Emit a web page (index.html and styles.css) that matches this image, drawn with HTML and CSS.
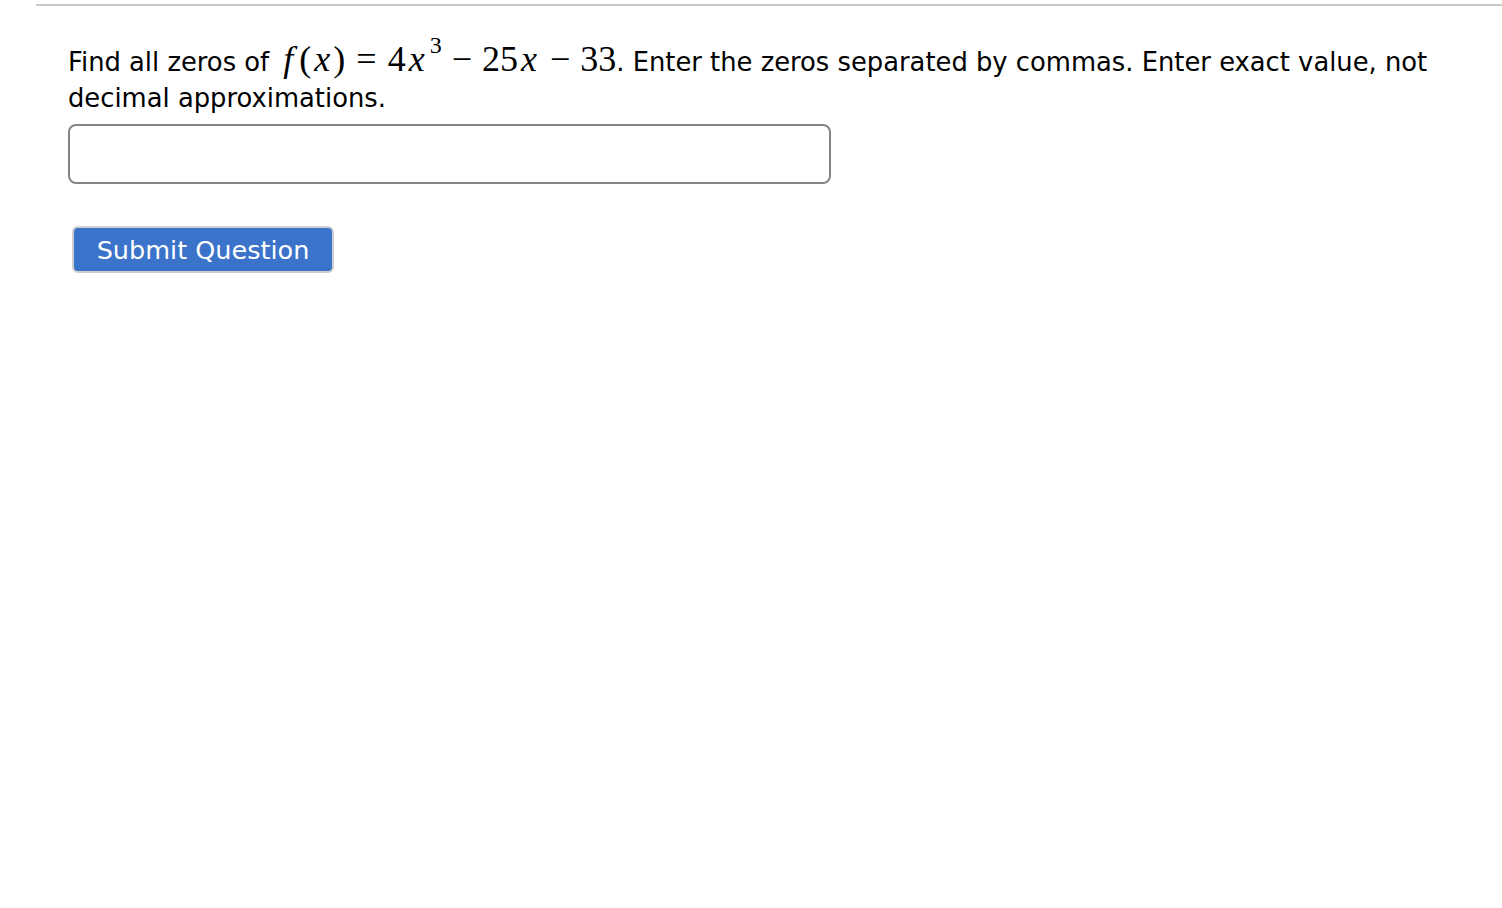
FILE: index.html
```html
<html>
<head>
<meta charset="UTF-8">
<link rel="stylesheet" href="styles.css">
</head>
<body>
<div class="rule"></div>
<div class="question">
    <p class="prompt">
        Find all zeros of
        <span class="math"><i class="fn">f</i>(<i>x</i>)<span class="rel">=</span>4<i>x</i><sup>3</sup><span class="op">&minus;</span>25<i>x</i><span class="op">&minus;</span>33</span>.
        Enter the zeros separated by commas. Enter exact value, not decimal approximations.
    </p>
    <input type="text" class="answer">
    <div class="actions">
        <button class="submit">Submit Question</button>
    </div>
</div>
</body>
</html>
```

FILE: styles.css
```css
body {
    margin: 0;
    background: #fff;
    color: #000;
    font-family: "DejaVu Sans", sans-serif;
}

.rule {
    height: 2px;
    margin: 4px 0 0 36px;
    background-color: #c8c8c8;
}

.question {
    padding: 0 60px 0 68px;
}

.prompt {
    margin: 35px 0 0 0;
    font-size: 25.8px;
    line-height: 36px;
}

/* inline math, made to look like the typeset formula */
.math {
    font-family: "Liberation Serif", serif;
    font-size: 36px;
    line-height: 36px;
    white-space: nowrap;
    margin-left: 4px;
}
.math i {
    font-style: italic;
    padding: 0 3px;
}
.math i.fn {
    padding: 0 6px 0 2px;
}
.math sup {
    font-size: 24px;
    vertical-align: 0;
    position: relative;
    top: -18px;
    line-height: 0;
    padding-left: 2px;
}
.math .rel {
    margin: 0 11px;
}
.math .op {
    margin: 0 10px;
}

.answer {
    display: block;
    box-sizing: border-box;
    width: 763px;
    height: 60px;
    margin-top: 8px;
    border: 2px solid #858585;
    border-radius: 8px;
    background: #fff;
    font-size: 26px;
    padding: 0 12px;
}

.actions {
    margin-top: 42px;
    padding-left: 4px;
}

.submit {
    box-sizing: border-box;
    width: 262px;
    height: 47px;
    border: 2px solid #cfcfcf;
    border-radius: 6px;
    background-color: #3b73ca;
    color: #fff;
    font-family: "DejaVu Sans", sans-serif;
    font-size: 25.5px;
    padding: 0;
}
```
